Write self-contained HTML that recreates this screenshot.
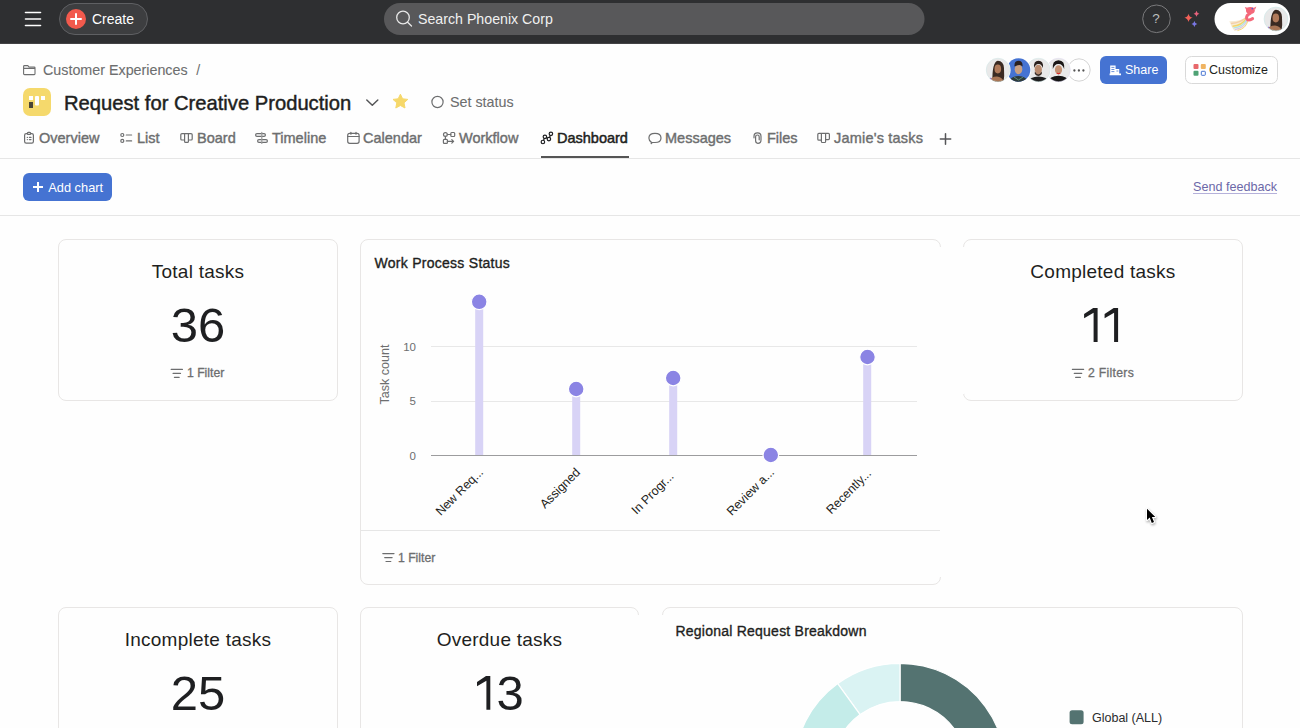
<!DOCTYPE html>
<html><head><meta charset="utf-8">
<style>
*{box-sizing:border-box;margin:0;padding:0}
html,body{width:1300px;height:728px;overflow:hidden;background:#fefefe;font-family:"Liberation Sans",sans-serif;color:#1e1f21}
.a{position:absolute;white-space:nowrap}
svg{position:absolute;overflow:visible}
#top{position:absolute;left:0;top:0;width:1300px;height:44px;background:#2e2f31;border-bottom:1px solid #434345}
.t14{font-size:14px;line-height:14px}
.tab{font-size:14.5px;line-height:15px;color:#6d6e6f;-webkit-text-stroke:0.4px #6d6e6f}
.card{position:absolute;background:#fefefe;border:1px solid #e8e6e5;border-radius:8px}
.ctitle{position:absolute;left:0;right:0;text-align:center;font-size:19px;line-height:20px;letter-spacing:0.25px;color:#1e1f21}
.cnum{position:absolute;left:0;right:0;text-align:center;font-size:49px;line-height:48px;color:#1e1f21}
.filt{font-size:12.2px;line-height:12px;color:#6d6e6f;-webkit-text-stroke:0.3px #6d6e6f}
</style></head><body>

<!-- TOP BAR -->
<div id="top"></div>
<svg style="left:0;top:0" width="1300" height="44">
  <g stroke="#fff" stroke-width="1.6" stroke-linecap="round">
    <line x1="25.5" y1="12.5" x2="40.5" y2="12.5"/>
    <line x1="25.5" y1="19" x2="40.5" y2="19"/>
    <line x1="25.5" y1="25.5" x2="40.5" y2="25.5"/>
  </g>
  <rect x="59.5" y="3.5" width="88" height="31" rx="15.5" fill="#3d3e40" stroke="#5f6063" stroke-width="1"/>
  <circle cx="76" cy="19" r="10" fill="#f25a4d"/>
  <g stroke="#fff" stroke-width="2" stroke-linecap="round"><line x1="76" y1="14" x2="76" y2="24"/><line x1="71" y1="19" x2="81" y2="19"/></g>
  <rect x="384" y="3" width="540.5" height="32" rx="16" fill="#58585a"/>
  <circle cx="403" cy="17.5" r="6.3" fill="none" stroke="#e8e8e8" stroke-width="1.3"/>
  <line x1="407.6" y1="22.2" x2="411.5" y2="26" stroke="#e8e8e8" stroke-width="1.3" stroke-linecap="round"/>
  <circle cx="1156.5" cy="18.8" r="13.8" fill="none" stroke="#7a7a7c" stroke-width="1"/>
  <rect x="1214.5" y="3" width="75.5" height="32" rx="16" fill="#fff"/>
</svg>
<div class="a t14" style="left:92px;top:12px;color:#fff">Create</div>
<div class="a" style="left:418px;top:12px;font-size:14.2px;line-height:14px;color:#f0f0f0">Search Phoenix Corp</div>
<div class="a" style="left:1152.3px;top:12.2px;font-size:13.5px;line-height:14px;color:#bdbdbd">?</div>

<!-- HEADER -->
<div class="a" style="left:43px;top:63px;font-size:14.3px;line-height:14px;color:#6d6e6f;-webkit-text-stroke:0.1px #6d6e6f">Customer Experiences</div>
<div class="a" style="left:196.3px;top:63px;font-size:14.3px;line-height:14px;color:#6d6e6f">/</div>
<div class="a" style="left:64px;top:93px;font-size:20.2px;line-height:20px;color:#1e1f21;-webkit-text-stroke:0.45px #1e1f21">Request for Creative Production</div>
<div class="a" style="left:450px;top:95.3px;font-size:14.3px;line-height:14px;color:#6d6e6f;-webkit-text-stroke:0.1px #6d6e6f">Set status</div>

<!-- TABS -->
<div class="a tab" style="left:39px;top:131px">Overview</div>
<div class="a tab" style="left:137px;top:131px">List</div>
<div class="a tab" style="left:197px;top:131px">Board</div>
<div class="a tab" style="left:272px;top:131px">Timeline</div>
<div class="a tab" style="left:363px;top:131px">Calendar</div>
<div class="a tab" style="left:459px;top:131px">Workflow</div>
<div class="a tab" style="left:557px;top:131px;color:#1e1f21;-webkit-text-stroke:0.5px #1e1f21">Dashboard</div>
<div class="a tab" style="left:665px;top:131px">Messages</div>
<div class="a tab" style="left:767px;top:131px">Files</div>
<div class="a tab" style="left:834px;top:131px;letter-spacing:0.2px">Jamie's tasks</div>
<div class="a" style="left:0;top:158px;width:1300px;height:1px;background:#e6e6e6"></div>
<div class="a" style="left:541px;top:156px;width:88px;height:2px;background:#555"></div>

<!-- TOOLBAR -->
<div class="a" style="left:23px;top:173px;width:89px;height:28px;border-radius:6px;background:#4573d2"></div>
<div class="a" style="left:48.3px;top:181px;font-size:12.8px;line-height:13px;color:#fff">Add chart</div>
<div class="a" style="left:1193px;top:181px;font-size:12.6px;line-height:13px;color:#6c68a8;text-decoration:underline;text-decoration-color:#b5b1da;text-decoration-thickness:1.3px;text-underline-offset:1.8px">Send feedback</div>
<div class="a" style="left:0;top:215px;width:1300px;height:1px;background:#e6e6e6"></div>

<!-- CARDS -->
<div class="card" style="left:58px;top:239px;width:280px;height:162px">
  <div class="ctitle" style="top:21.8px">Total tasks</div>
  <div class="cnum" style="top:60.7px">36</div>
</div>
<div class="card" style="left:360px;top:239px;width:581px;height:346px">
  <div class="a" style="left:13.5px;top:15.6px;font-size:14px;line-height:14px;letter-spacing:0.27px;color:#1e1f21;-webkit-text-stroke:0.35px #1e1f21">Work Process Status</div>
  <div class="a" style="left:0;top:290px;width:579px;height:1px;background:#e6e6e6"></div>
</div>
<div class="card" style="left:963px;top:239px;width:280px;height:162px">
  <div class="ctitle" style="top:21.8px">Completed tasks</div>
  
</div>
<div class="card" style="left:58px;top:607px;width:280px;height:200px">
  <div class="ctitle" style="top:21.8px">Incomplete tasks</div>
  <div class="cnum" style="top:60.7px">25</div>
</div>
<div class="card" style="left:360px;top:607px;width:279px;height:200px">
  <div class="ctitle" style="top:21.8px">Overdue tasks</div>
  <div class="a" style="left:135.5px;top:60.7px;font-size:49px;line-height:48px;color:#1e1f21">3</div>
</div>
<div class="card" style="left:662px;top:607px;width:581px;height:200px">
  <div class="a" style="left:12.5px;top:16px;font-size:14px;line-height:14px;letter-spacing:0.23px;color:#1e1f21;-webkit-text-stroke:0.35px #1e1f21">Regional Request Breakdown</div>
</div>



<!-- hide some vertical borders (as in reference) -->
<div class="a" style="left:940px;top:247px;width:1px;height:330px;background:#fefefe"></div>
<div class="a" style="left:963px;top:247px;width:1px;height:147px;background:#fefefe"></div>
<div class="a" style="left:638px;top:615px;width:1px;height:113px;background:#fefefe"></div>
<div class="a" style="left:662px;top:615px;width:1px;height:113px;background:#fefefe"></div>
<!-- ICON OVERLAY -->
<svg style="left:0;top:0" width="1300" height="728">
  <!-- sparkles -->
  <defs>
    <linearGradient id="sg" x1="0" y1="0" x2="0" y2="1"><stop offset="0" stop-color="#f26b5b"/><stop offset="1" stop-color="#e8628a"/></linearGradient>
  </defs>
  <path d="M1188.5,13.8 Q1189.2,17.1 1192.6,17.8 Q1189.2,18.5 1188.5,22 Q1187.8,18.5 1184.4,17.8 Q1187.8,17.1 1188.5,13.8Z" fill="#f26158"/>
  <path d="M1196.5,10.8 Q1197,13.3 1199.4,13.8 Q1197,14.3 1196.5,16.8 Q1196,14.3 1193.6,13.8 Q1196,13.3 1196.5,10.8Z" fill="#e9637d"/>
  <path d="M1194.4,21 Q1194.9,23.5 1197.3,24 Q1194.9,24.5 1194.4,27 Q1193.9,24.5 1191.5,24 Q1193.9,23.5 1194.4,21Z" fill="#7a78e6"/>
  <!-- bird logo -->
  <g>
    <path d="M1246.5,17 Q1240,21.5 1229.3,21.3 Q1231.5,27.5 1234.5,31 Q1244,30 1248,21.5Z" fill="#f7ead3"/>
    <path d="M1245.8,17.8 Q1240.5,22.8 1231,23.5" stroke="#f4cfa6" stroke-width="1.4" fill="none"/>
    <path d="M1246.2,18.6 Q1242,25.5 1232.5,26.3" stroke="#f2d56b" stroke-width="1.5" fill="none"/>
    <path d="M1246.6,19.4 Q1243.5,26.8 1233.5,28" stroke="#a6e6ea" stroke-width="1.1" fill="none"/>
    <path d="M1247.2,20.2 Q1244.5,28 1235,29.6" stroke="#d2c0f2" stroke-width="1" fill="none"/>
    <path d="M1247.8,21 Q1246,28.5 1237.5,30.6" stroke="#f3da7a" stroke-width="1" fill="none"/>
    <ellipse cx="1250.4" cy="10.4" rx="4.4" ry="3.4" fill="#f4687a"/>
    <path d="M1244.8,7 L1249.6,8.4 L1247.4,12.6Z" fill="#f4687a"/>
    <path d="M1253.6,8 L1256.3,6.6 L1255,9.8Z" fill="#f4687a"/>
    <path d="M1250.3,13.3 Q1246.2,14.8 1246.6,18.4 Q1247.6,21.6 1252.6,18.6" stroke="#f4687a" stroke-width="3" fill="none" stroke-linecap="round"/>
    <circle cx="1252.3" cy="8.6" r="0.85" fill="#4b63e0"/>
  </g>
  <!-- profile avatar -->
  <g clip-path="url(#av0)">
    <rect x="1263" y="6" width="26" height="26" fill="#e8e8e8"/>
    <path d="M1270.4,31 Q1270,11 1275.8,9.8 Q1281.6,10 1282,17 Q1282.6,25 1281.5,31Z" fill="#3a2a22"/>
    <ellipse cx="1275.8" cy="18" rx="3.3" ry="4.4" fill="#b07a5a"/>
    <path d="M1266,32 Q1268,25.5 1275,25.5 Q1280,25.8 1283,32Z" fill="#a87555"/>
    <path d="M1265.5,29 L1269,26.6 L1270,32 L1265,32Z" fill="#7b4fd6"/>
  </g>
  <circle cx="1276" cy="19" r="11.9" fill="none" stroke="#cfe7e6" stroke-width="0.7"/>
  <!-- folder icon -->
  <path d="M23.6,66.5 Q23.6,65.6 24.5,65.6 L27.8,65.6 L29,67 L34.2,67 Q35,67 35,67.8 L35,73.8 Q35,74.6 34.2,74.6 L24.5,74.6 Q23.6,74.6 23.6,73.8Z M23.6,68.4 L35,68.4" fill="none" stroke="#6d6e6f" stroke-width="1.1"/>
  <!-- project icon -->
  <rect x="23" y="88" width="28" height="28" rx="7" fill="#f5d96c"/>
  <rect x="29" y="96" width="4" height="4" fill="#fff"/>
  <rect x="35" y="96" width="4" height="9.5" rx="1" fill="#fff"/>
  <rect x="41" y="96" width="4" height="4" fill="#fff"/>
  <rect x="29" y="102" width="4" height="6" fill="#4a4536"/>
  <!-- chevron -->
  <path d="M366.8,100 L372.3,105.2 L377.8,100" fill="none" stroke="#555658" stroke-width="1.5" stroke-linecap="round" stroke-linejoin="round"/>
  <!-- star -->
  <path d="M400.4,94.2 L402.6,98.8 L407.8,99.4 L404,102.8 L405,108 L400.4,105.5 L395.8,108 L396.8,102.8 L393,99.4 L398.2,98.8Z" fill="#f6d86a" stroke="#f6d86a" stroke-width="1" stroke-linejoin="round"/>
  <!-- status circle -->
  <circle cx="437.5" cy="102" r="5.6" fill="none" stroke="#6d6e6f" stroke-width="1.2"/>

  <!-- tab icons -->
  <g fill="none" stroke="#6d6e6f" stroke-width="1.2" stroke-linecap="round" stroke-linejoin="round">
    <!-- overview clipboard -->
    <rect x="24.6" y="133.6" width="8.8" height="9.6" rx="1.6"/>
    <rect x="27.3" y="132.4" width="3.4" height="2" rx="1" fill="#fff"/>
    <line x1="27.3" y1="137.4" x2="27.4" y2="137.4"/><line x1="29.4" y1="137.4" x2="31" y2="137.4"/>
    <line x1="27.3" y1="139.6" x2="27.4" y2="139.6"/><line x1="29.4" y1="139.6" x2="31" y2="139.6"/>
    <!-- list -->
    <circle cx="122.3" cy="135" r="1.5"/><circle cx="122.3" cy="140.9" r="1.5"/>
    <line x1="126.3" y1="135" x2="131.6" y2="135"/><line x1="126.3" y1="140.9" x2="131.6" y2="140.9"/>
    <!-- board -->
    <path d="M180.8,134.8 Q180.8,133.6 182,133.6 L191,133.6 Q192.2,133.6 192.2,134.8 L192.2,139 Q192.2,140 191.2,140 L188.4,140 L188.4,141.4 Q188.4,142.4 187.4,142.4 L185.6,142.4 Q184.6,142.4 184.6,141.4 L184.6,140 L181.8,140 Q180.8,140 180.8,139Z M184.6,133.6 L184.6,140 M188.4,133.6 L188.4,140"/>
    <!-- timeline -->
    <path d="M261.8,133.6 L257,133.6 Q255.6,133.6 255.6,135 Q255.6,136.4 257,136.4 L261.8,136.4 M261.8,133.6 L264,133.6 Q265.4,133.6 265.4,135 Q265.4,136.4 264,136.4 L261.8,136.4"/>
    <path d="M261.8,139.6 L259,139.6 Q257.6,139.6 257.6,141 Q257.6,142.4 259,142.4 L261.8,142.4 M261.8,139.6 L266,139.6 Q267.4,139.6 267.4,141 Q267.4,142.4 266,142.4 L261.8,142.4"/>
    <line x1="261.8" y1="132.4" x2="261.8" y2="143.4" stroke="#9a9b9c"/>
    <!-- calendar -->
    <rect x="347.7" y="133.4" width="11.4" height="9.9" rx="2"/>
    <line x1="347.7" y1="136.5" x2="359.1" y2="136.5"/>
    <!-- workflow -->
    <circle cx="445.4" cy="134.5" r="1.9"/>
    <rect x="450.8" y="132.5" width="3.9" height="4" rx="0.9"/>
    <line x1="447.3" y1="134.5" x2="450.8" y2="134.5"/>
    <line x1="445.4" y1="136.4" x2="445.4" y2="139.4"/>
    <rect x="443.4" y="139.4" width="4" height="4" rx="0.9"/>
    <path d="M447.4,141.4 L453.6,141.4 M451.8,139.6 L453.6,141.4 L451.8,143.2"/>
    <!-- messages -->
    <path d="M651.2,142 Q648.9,140.4 648.9,137.9 Q648.9,133.3 655,133.3 Q661,133.3 661,137.9 Q661,142.5 655,142.5 L652.2,142.5 L651.2,143.6Z"/>
    <!-- files clip -->
    <path d="M754,137.8 L754,136.4 Q754,132.8 757.5,132.8 Q761,132.8 761,136.4 L761,140 Q761,143.3 757.8,143.3 Q755.6,143.3 755.6,140.6 L755.6,136.8 Q755.6,135 757.4,135 Q759.2,135 759.2,136.8 L759.2,139.8"/>
    <!-- jamie board -->
    <path d="M817.8,134.4 Q817.8,133.3 818.9,133.3 L828.4,133.3 Q829.4,133.3 829.4,134.4 L829.4,138.6 Q829.4,139.6 828.4,139.6 L825.6,139.6 L825.6,141.4 Q825.6,142.5 824.6,142.5 L822.4,142.5 Q821.4,142.5 821.4,141.4 L821.4,140.2 L818.9,140.2 Q817.8,140.2 817.8,139.2Z M821.4,133.3 L821.4,140.2 M825.6,133.3 L825.6,139.6"/>
    <!-- plus -->
    <g stroke="#555658" stroke-width="1.5"><line x1="945.5" y1="133.8" x2="945.5" y2="144.2"/><line x1="940.3" y1="139" x2="950.7" y2="139"/></g>
  </g>
  <!-- calendar ticks -->
  <g stroke="#6d6e6f" stroke-width="1.2" stroke-linecap="round"><line x1="350.9" y1="132.4" x2="350.9" y2="134.2"/><line x1="356" y1="132.4" x2="356" y2="134.2"/></g>
  <!-- dashboard icon -->
  <g fill="none" stroke="#1e1f21" stroke-width="1.2">
    <circle cx="542.9" cy="142" r="1.75"/><circle cx="544.9" cy="136.8" r="1.75"/><circle cx="548.9" cy="139.1" r="1.75"/><circle cx="550.9" cy="133.85" r="1.75"/>
    <line x1="543.6" y1="140.4" x2="544.2" y2="138.4"/><line x1="546.4" y1="137.7" x2="547.4" y2="138.3"/><line x1="549.6" y1="137.5" x2="550.2" y2="135.4"/>
  </g>

  <!-- avatars in header -->
  <defs>
    <clipPath id="av1"><circle cx="998" cy="70" r="11.8"/></clipPath>
    <clipPath id="av2"><circle cx="1018.5" cy="70" r="11.8"/></clipPath>
    <clipPath id="av3"><circle cx="1038.5" cy="70" r="11.8"/></clipPath>
    <clipPath id="av4"><circle cx="1058.5" cy="70" r="11.8"/></clipPath>
    <clipPath id="av0"><circle cx="1276" cy="19" r="11.8"/></clipPath>
  </defs>
  <g>
    <circle cx="1079" cy="70" r="12.5" fill="#fff"/>
    <circle cx="1079" cy="70" r="11.2" fill="#fff" stroke="#cfcfcf" stroke-width="0.9"/>
    <circle cx="1074.4" cy="70.5" r="1.15" fill="#555"/><circle cx="1078.9" cy="70.5" r="1.15" fill="#555"/><circle cx="1083.4" cy="70.5" r="1.15" fill="#555"/>

    <circle cx="1058.5" cy="70" r="12.6" fill="#fff"/>
    <g clip-path="url(#av4)">
      <rect x="1046" y="57" width="25" height="26" fill="#e9e9e9"/>
      <path d="M1052.8,69 Q1051.8,60.5 1058.5,60.2 Q1065.2,60.5 1064.2,69 Q1062,63.5 1058.5,64 Q1055,63.5 1052.8,69Z" fill="#1a1616"/>
      <ellipse cx="1058.5" cy="69.8" rx="3.6" ry="4.6" fill="#c39173"/>
      <path d="M1056.8,73 Q1058.5,74.3 1060.2,73" stroke="#d42a2a" stroke-width="1.1" fill="none"/>
      <path d="M1047,83 Q1049,76 1058.5,75.8 Q1068,76 1070,83Z" fill="#141414"/>
    </g>
    <circle cx="1058.5" cy="70" r="11.8" fill="none" stroke="#ddd6ee" stroke-width="0.5"/>

    <circle cx="1038.5" cy="70" r="12.6" fill="#fff"/>
    <g clip-path="url(#av3)">
      <rect x="1026" y="57" width="25" height="26" fill="#e9e9e9"/>
      <path d="M1034,68 Q1033.3,60.8 1038.5,60.8 Q1043.7,60.8 1043,68 Q1041,63.5 1038.5,64 Q1036,63.5 1034,68Z" fill="#2a201c"/>
      <ellipse cx="1038.3" cy="69.5" rx="3.6" ry="4.8" fill="#b98b6e"/>
      <path d="M1034.8,71.5 Q1038.3,77 1041.8,71.5 L1041.8,74 Q1038.3,78 1034.8,74Z" fill="#3a2a22"/>
      <path d="M1027,83 Q1029,77 1038.5,76.5 Q1048,77 1050,83Z" fill="#1e1e1e"/>
    </g>
    <circle cx="1038.5" cy="70" r="11.8" fill="none" stroke="#cfe7e6" stroke-width="0.5"/>

    <circle cx="1018.5" cy="70" r="12.6" fill="#fff"/>
    <g clip-path="url(#av2)">
      <rect x="1006" y="57" width="25" height="26" fill="#4573d2"/>
      <ellipse cx="1018.5" cy="69.2" rx="3.8" ry="5" fill="#c8a083"/>
      <path d="M1014.5,66.5 Q1014,60.8 1018.5,60.8 Q1023,60.8 1022.5,66.5 Q1020.5,63.5 1014.5,66.5Z" fill="#2a2020"/>
      <path d="M1008,83 Q1010,76.5 1018.5,76 Q1027,76.5 1029,83Z" fill="#2f3b3a"/>
      <path d="M1014,77 L1018.5,80 L1023,77" stroke="#5b8a7a" stroke-width="1" fill="none"/>
    </g>

    <circle cx="998" cy="70" r="12.6" fill="#fff"/>
    <g clip-path="url(#av1)">
      <rect x="985" y="57" width="25" height="26" fill="#e9e9e9"/>
      <path d="M992.4,82 Q992,62 997.8,60.8 Q1003.6,61 1004,68 Q1004.6,76 1003.5,82Z" fill="#3a2a22"/>
      <ellipse cx="997.8" cy="69" rx="3.3" ry="4.4" fill="#b07a5a"/>
      <path d="M988,83 Q990,76.5 997,76.5 Q1002,76.8 1005,83Z" fill="#a87555"/>
      <path d="M987.5,80 L991,77.6 L992,83 L987,83Z" fill="#7b4fd6"/>
    </g>
    <circle cx="998" cy="70" r="11.8" fill="none" stroke="#cfe7e6" stroke-width="0.5"/>
  </g>
  <!-- share button -->
  <rect x="1100" y="56" width="67" height="28" rx="6" fill="#4573d2"/>
  <path d="M1110.2,65.4 L1115.6,65.4 L1115.6,69 L1119.2,69 L1119.2,73.6 L1121,73.6 L1121,75.2 L1109.6,75.2 L1109.6,73.6 L1110.2,73.6Z" fill="#fff"/>
  <g stroke="#4573d2" stroke-width="0.8"><line x1="1111.4" y1="67.4" x2="1114.4" y2="67.4"/><line x1="1111.4" y1="69.5" x2="1114.4" y2="69.5"/><line x1="1111.4" y1="71.6" x2="1114.4" y2="71.6"/><line x1="1116.4" y1="71" x2="1118.4" y2="71"/></g>
  <!-- customize button -->
  <rect x="1185.5" y="56.5" width="92" height="27" rx="6" fill="#fff" stroke="#d9d9d9" stroke-width="1"/>
  <rect x="1193.5" y="64" width="5" height="5" rx="1" fill="#e8686b"/>
  <rect x="1200.8" y="64" width="5" height="5" rx="1" fill="#f0b462"/>
  <rect x="1193.5" y="70.8" width="5" height="5" rx="1" fill="#4fa275"/>
  <rect x="1201.3" y="71.3" width="4" height="4" rx="0.6" fill="none" stroke="#4573d2" stroke-width="1"/>
  <!-- add chart plus -->
  <g stroke="#fff" stroke-width="2"><line x1="38" y1="182" x2="38" y2="192"/><line x1="33" y1="187" x2="43" y2="187"/></g>

  <!-- filter icons -->
  <g stroke="#6d6e6f" stroke-width="1.2" stroke-linecap="round">
    <line x1="171.2" y1="369.4" x2="182.4" y2="369.4"/><line x1="173.1" y1="373.4" x2="180.5" y2="373.4"/><line x1="174.4" y1="377.3" x2="179.2" y2="377.3"/>
    <line x1="1072.4" y1="369.4" x2="1083.6" y2="369.4"/><line x1="1074.3" y1="373.4" x2="1081.7" y2="373.4"/><line x1="1075.6" y1="377.3" x2="1080.4" y2="377.3"/>
    <line x1="382.8" y1="553.6" x2="394.0" y2="553.6"/><line x1="384.7" y1="557.6" x2="392.1" y2="557.6"/><line x1="386.0" y1="561.5" x2="390.8" y2="561.5"/>
  </g>
  <!-- CHART -->
  <g stroke="#e8e8e8" stroke-width="1"><line x1="431" y1="346.5" x2="917" y2="346.5"/><line x1="431" y1="401.5" x2="917" y2="401.5"/></g>
  <g fill="#d8d3f6">
    <rect x="475.2" y="302" width="8" height="153.5"/>
    <rect x="572.2" y="389" width="8" height="66.5"/>
    <rect x="669.2" y="378" width="8" height="77.5"/>
    <rect x="863.2" y="357" width="8" height="98.5"/>
  </g>
  <line x1="431" y1="455.5" x2="917" y2="455.5" stroke="#9c9c9e" stroke-width="1"/>
  <g fill="#8b84e4" stroke="#fff" stroke-width="1.2">
    <circle cx="479.2" cy="301.8" r="7.8"/>
    <circle cx="576.2" cy="389" r="7.8"/>
    <circle cx="673.2" cy="378" r="7.8"/>
    <circle cx="770.8" cy="455" r="7.8"/>
    <circle cx="867.5" cy="357" r="7.8"/>
  </g>
  <g font-family="Liberation Sans" font-size="11.5" fill="#6d6e6f" text-anchor="end">
    <text x="416" y="351">10</text><text x="416" y="405.2">5</text><text x="416" y="459.7">0</text>
  </g>
  <text transform="translate(388.5,374.5) rotate(-90)" text-anchor="middle" font-family="Liberation Sans" font-size="12.6" fill="#6d6e6f">Task count</text>
  <g font-family="Liberation Sans" font-size="12.4" fill="#1e1f21" text-anchor="end">
    <text transform="translate(484,473) rotate(-45)">New Req...</text>
    <text transform="translate(581,473) rotate(-45)">Assigned</text>
    <text transform="translate(674.5,477) rotate(-45)">In Progr...</text>
    <text transform="translate(775,473) rotate(-45)">Review a...</text>
    <text transform="translate(872,474) rotate(-45)">Recently...</text>
  </g>

  <!-- DONUT -->
  <g transform="translate(900,769.4)" stroke="#fff" stroke-width="1.2">
    <path d="M0,-106 A106,106 0 1,1 -60,87.4 L-38.4,55.9 A67.8,67.8 0 1,0 0,-67.8Z" fill="#547371"/>
    <path d="M-62.3,-85.8 A106,106 0 0,1 0,-106 L0,-67.8 A67.8,67.8 0 0,0 -39.9,-54.8Z" fill="#daf3f3"/>
    <path d="M-106,0 A106,106 0 0,1 -62.3,-85.8 L-39.9,-54.8 A67.8,67.8 0 0,0 -67.8,0Z" fill="#c4ece9"/>
  </g>
  <rect x="1069.6" y="710.3" width="14" height="14" rx="2.5" fill="#547371"/>


  <!-- digit ones -->
  <g fill="#1e1f21">
    <path d="M1097.6,307.9 L1097.6,341.9 L1093.6,341.9 L1093.6,312.8 L1084.1,318.2 L1084.1,314 L1093.2,307.9Z"/>
    <path d="M1118.1,307.9 L1118.1,341.9 L1114.1,341.9 L1114.1,312.8 L1104.6,318.2 L1104.6,314 L1113.7,307.9Z"/>
    <path d="M490.3,676 L490.3,709.8 L486.4,709.8 L486.4,680.8 L477,686.2 L477,682 L486,676Z"/>
  </g>
  <!-- cursor -->
  <defs><filter id="blr" x="-50%" y="-50%" width="200%" height="200%"><feGaussianBlur stdDeviation="0.9"/></filter></defs>
  <path d="M1147,508.8 L1147,520 L1149.7,517.6 L1151.8,522.9 L1154,522 L1151.9,516.9 L1155.3,516.9Z" fill="#000" stroke="#000" stroke-width="2.4" stroke-linejoin="round" opacity="0.28" transform="translate(0.6,1.4)" filter="url(#blr)"/>
  <path d="M1147,508.8 L1147,520 L1149.7,517.6 L1151.8,522.9 L1154,522 L1151.9,516.9 L1155.3,516.9Z" fill="#000" stroke="#fff" stroke-width="2.2" stroke-linejoin="round" paint-order="stroke"/>
</svg>
<div class="a" style="left:1092px;top:712px;font-size:12.5px;line-height:13px;color:#2a2b2d">Global (ALL)</div>
<div class="a" style="left:1125px;top:64px;font-size:12.5px;line-height:13px;color:#fff">Share</div>
<div class="a" style="left:1209px;top:64px;font-size:12.5px;line-height:13px;color:#1e1f21">Customize</div>
<div class="a filt" style="left:187px;top:367px">1 Filter</div>
<div class="a filt" style="left:1088px;top:367px;letter-spacing:0.3px">2 Filters</div>
<div class="a filt" style="left:398px;top:552px">1 Filter</div>

</body></html>
